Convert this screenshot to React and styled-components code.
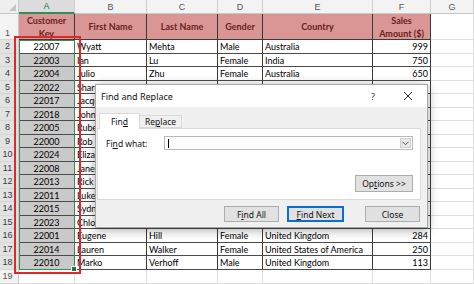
import styled, { createGlobalStyle } from 'styled-components';

const GlobalStyle = createGlobalStyle`
  html, body {
    margin: 0;
    padding: 0;
    background: #ffffff;
  }
  body {
    font-family: 'Lato', 'Liberation Sans', sans-serif;
  }
`;

const COLUMNS = ['A', 'B', 'C', 'D', 'E', 'F', 'G'];

const HEADERS = [
  ['Customer', 'Key'],
  ['First Name'],
  ['Last Name'],
  ['Gender'],
  ['Country'],
  ['Sales', 'Amount ($)'],
];

// rows 5..15 sit under the dialog: only the key, the start of the first name
// and a sliver of the amount show, so the rest is left blank
const ROWS = [
  ['22007', 'Wyatt', 'Mehta', 'Male', 'Australia', 999],
  ['22003', 'Ian', 'Lu', 'Female', 'India', 750],
  ['22004', 'Julio', 'Zhu', 'Female', 'Australia', 650],
  ['22022', 'Sharon', '', '', '', 545],
  ['22017', 'Jacquelyn', '', '', '', 423],
  ['22018', 'Johnny', '', '', '', 378],
  ['22005', 'Ruben', '', '', '', 365],
  ['22000', 'Rob', '', '', '', 359],
  ['22024', 'Elizabeth', '', '', '', 348],
  ['22008', 'Janet', '', '', '', 327],
  ['22013', 'Rick', '', '', '', 318],
  ['22011', 'Luke', '', '', '', 303],
  ['22015', 'Sydney', '', '', '', 298],
  ['22023', 'Chloe', '', '', '', 291],
  ['22001', 'Eugene', 'Hill', 'Female', 'United Kingdom', 284],
  ['22014', 'Lauren', 'Walker', 'Female', 'United States of America', 250],
  ['22010', 'Marko', 'Verhoff', 'Male', 'United Kingdom', 113],
];

// rows 2..18 alternate 14/13 so the block is 230px high
const rowHeight = (i) => (i % 2 === 0 ? 14 : 13);

export default function App() {
  const rowTemplate = ['14px', '26px', ...ROWS.map((_, i) => `${rowHeight(i)}px`), '14px'].join(' ');

  return (
    <Page>
      <GlobalStyle />
      <Sheet style={{ gridTemplateRows: rowTemplate }}>
        <Corner />
        {COLUMNS.map((c) => (
          <ColHead key={c} $selected={c === 'A'}>
            {c}
          </ColHead>
        ))}

        <RowHead $bottom>1</RowHead>
        {HEADERS.map((lines, i) => (
          <HeadCell key={i}>
            {lines.map((l) => (
              <span key={l}>{l}</span>
            ))}
          </HeadCell>
        ))}
        <Cell />

        {ROWS.map((row, r) => (
          <Row key={r} row={row} num={r + 2} />
        ))}

        <RowHead>19</RowHead>
        {COLUMNS.map((c) => (
          <Cell key={c} />
        ))}
      </Sheet>

      <Selection>
        <FillHandle />
      </Selection>
      <Marker />

      <Dialog>
        <TitleBar>
          <Title>Find and Replace</Title>
          <TitleTools>
            <Help>?</Help>
            <svg width="10" height="10" viewBox="0 0 10 10">
              <path d="M1 1 L9 9 M9 1 L1 9" stroke="#222" strokeWidth="1" />
            </svg>
          </TitleTools>
        </TitleBar>
        <DialogBody>
          <Tabs>
            <Tab $active>
              Fin<u>d</u>
            </Tab>
            <Tab>
              Re<u>p</u>lace
            </Tab>
          </Tabs>
          <Panel>
            <FieldRow>
              <Label>
                Fi<u>n</u>d what:
              </Label>
              <Combo>
                <Caret />
                <DropButton>
                  <svg width="7" height="5" viewBox="0 0 7 5">
                    <path d="M0.5 0.8 L3.5 3.8 L6.5 0.8" fill="none" stroke="#555" strokeWidth="1" />
                  </svg>
                </DropButton>
              </Combo>
            </FieldRow>
            <OptionsRow>
              <Button $width={58} $height={17}>
                Op<u>t</u>ions &gt;&gt;
              </Button>
            </OptionsRow>
          </Panel>
          <ButtonRow>
            <Button $width={55}>
              F<u>i</u>nd All
            </Button>
            <Button $width={57} $primary>
              <u>F</u>ind Next
            </Button>
            <Spacer />
            <Button $width={55}>Close</Button>
          </ButtonRow>
        </DialogBody>
      </Dialog>
    </Page>
  );
}

function Row({ row, num }) {
  const [key, first, last, gender, country, amount] = row;
  return (
    <>
      <RowHead $selected>{num}</RowHead>
      <Cell $table $align="center" $fill={num === 2 ? '#ffffff' : '#c9c9c9'}>
        {key}
      </Cell>
      <Cell $table>{first}</Cell>
      <Cell $table>{last}</Cell>
      <Cell $table>{gender}</Cell>
      <Cell $table>{country}</Cell>
      <Cell $table $align="right">
        {amount}
      </Cell>
      <Cell />
    </>
  );
}

const Page = styled.div`
  position: relative;
  width: 474px;
  height: 284px;
  overflow: hidden;
  background: #ffffff;
`;

const Sheet = styled.div`
  display: grid;
  grid-template-columns: 19px 56px 72px 71px 45px 110px 58px 43px;
  width: 474px;
`;

const Corner = styled.div`
  position: relative;
  box-sizing: border-box;
  background: #efefef;
  border-right: 1px solid #c8c8c8;
  border-bottom: 1px solid #c8c8c8;

  &::after {
    content: '';
    position: absolute;
    right: 2px;
    bottom: 2px;
    border-left: 7px solid transparent;
    border-bottom: 7px solid #c4c4c4;
  }
`;

const ColHead = styled.div`
  box-sizing: border-box;
  display: flex;
  align-items: center;
  justify-content: center;
  font-family: 'Liberation Sans', sans-serif;
  font-size: 9px;
  color: ${(p) => (p.$selected ? '#217346' : '#555555')};
  background: ${(p) => (p.$selected ? '#dcdcdc' : '#f3f3f3')};
  border-right: 1px solid #d0d0d0;
  border-bottom: ${(p) => (p.$selected ? '2px solid #2f8f55' : '1px solid #c8c8c8')};
`;

const RowHead = styled.div`
  box-sizing: border-box;
  display: flex;
  align-items: ${(p) => (p.$bottom ? 'flex-end' : 'center')};
  justify-content: center;
  padding: 0 3px 1px 0;
  font-family: 'Liberation Sans', sans-serif;
  font-size: 9px;
  color: ${(p) => (p.$selected ? '#3b3b3b' : '#555555')};
  background: ${(p) => (p.$selected ? '#e2e2e2' : '#f3f3f3')};
  border-right: 1px solid #c8c8c8;
  border-bottom: 1px solid #d6d6d6;
`;

const Cell = styled.div`
  box-sizing: border-box;
  display: flex;
  align-items: center;
  justify-content: ${(p) =>
    p.$align === 'right' ? 'flex-end' : p.$align === 'center' ? 'center' : 'flex-start'};
  padding: 0 2px;
  overflow: hidden;
  white-space: nowrap;
  font-size: 9px;
  color: #000000;
  background: ${(p) => p.$fill || '#ffffff'};
  border-right: 1px solid ${(p) => (p.$table ? '#3a3a3a' : '#dedede')};
  border-bottom: 1px solid ${(p) => (p.$table ? '#4a4a4a' : '#dedede')};
`;

const HeadCell = styled.div`
  box-sizing: border-box;
  display: flex;
  flex-direction: column;
  align-items: center;
  justify-content: center;
  font-size: 9px;
  font-weight: 700;
  line-height: 13px;
  color: #6a2020;
  background: #da9694;
  border-right: 1px solid #3a3a3a;
  border-bottom: 1px solid #3a3a3a;
`;

const Selection = styled.div`
  position: absolute;
  left: 19px;
  top: 40px;
  width: 56px;
  height: 230px;
  box-sizing: border-box;
  border: 1px solid #2f8f55;
  pointer-events: none;
`;

const FillHandle = styled.div`
  position: absolute;
  right: -3px;
  bottom: -3px;
  width: 4px;
  height: 4px;
  background: #217346;
  border: 1px solid #ffffff;
`;

const Marker = styled.div`
  position: absolute;
  left: 14px;
  top: 36px;
  width: 67px;
  height: 238px;
  box-sizing: border-box;
  border: 2px solid #e2262b;
  pointer-events: none;
`;

const Dialog = styled.div`
  position: absolute;
  left: 95px;
  top: 84px;
  width: 333px;
  height: 144px;
  box-sizing: border-box;
  display: flex;
  flex-direction: column;
  background: #f0f0f0;
  border: 1px solid #a8a8a8;
  box-shadow: 0 2px 10px rgba(0, 0, 0, 0.35);
  font-family: 'Noto Sans', 'Open Sans', sans-serif;
  font-size: 8.5px;
  color: #111111;
`;

const TitleBar = styled.div`
  height: 22px;
  display: flex;
  align-items: center;
  justify-content: space-between;
  padding: 0 14px 0 5px;
  background: #ffffff;
`;

const Title = styled.span`
  font-size: 9px;
`;

const TitleTools = styled.div`
  display: flex;
  align-items: center;
  gap: 28px;
`;

const Help = styled.span`
  font-size: 9px;
  color: #333;
`;

const DialogBody = styled.div`
  flex: 1;
  display: flex;
  flex-direction: column;
  padding: 6px 6px 0 1px;
`;

const Tabs = styled.div`
  display: flex;
  align-items: flex-end;
  padding-left: 2px;
  height: 15px;
`;

const Tab = styled.div`
  box-sizing: border-box;
  width: ${(p) => (p.$active ? 41 : 42)}px;
  height: ${(p) => (p.$active ? 16 : 13)}px;
  display: flex;
  align-items: center;
  justify-content: center;
  margin-bottom: ${(p) => (p.$active ? -1 : 0)}px;
  background: ${(p) => (p.$active ? '#ffffff' : '#f0f0f0')};
  border: 1px solid #d9d9d9;
  border-bottom: ${(p) => (p.$active ? 'none' : '1px solid #d9d9d9')};
  border-left: ${(p) => (p.$active ? '1px solid #d9d9d9' : 'none')};
  position: relative;
  z-index: ${(p) => (p.$active ? 1 : 0)};
`;

const Panel = styled.div`
  height: 72px;
  box-sizing: border-box;
  display: flex;
  flex-direction: column;
  justify-content: space-between;
  padding: 7px 7px 7px 8px;
  background: #ffffff;
  border: 1px solid #d9d9d9;
`;

const FieldRow = styled.div`
  display: flex;
  align-items: center;
`;

const Label = styled.span`
  width: 58px;
`;

const Combo = styled.div`
  flex: 1;
  height: 14px;
  box-sizing: border-box;
  display: flex;
  align-items: center;
  justify-content: space-between;
  padding: 0 1px 0 3px;
  border: 1px solid #b9b9b9;
  background: #ffffff;
`;

const Caret = styled.span`
  width: 1px;
  height: 9px;
  background: #000000;
`;

const DropButton = styled.span`
  width: 11px;
  height: 10px;
  box-sizing: border-box;
  display: flex;
  align-items: center;
  justify-content: center;
  background: #e8e8e8;
  border: 1px solid #cfcfcf;
`;

const OptionsRow = styled.div`
  display: flex;
  justify-content: flex-end;
`;

const Button = styled.div`
  width: ${(p) => p.$width}px;
  height: ${(p) => p.$height || 16}px;
  box-sizing: border-box;
  display: flex;
  align-items: center;
  justify-content: center;
  background: #e1e1e1;
  border: 1px solid ${(p) => (p.$primary ? '#0a6fd0' : '#adadad')};
  box-shadow: ${(p) => (p.$primary ? 'inset 0 0 0 1px #0a6fd0' : 'none')};
  color: #111111;
`;

const ButtonRow = styled.div`
  display: flex;
  justify-content: flex-end;
  gap: 8px;
  margin-top: 6px;
  padding-right: 1px;
`;

const Spacer = styled.span`
  width: 5px;
`;
